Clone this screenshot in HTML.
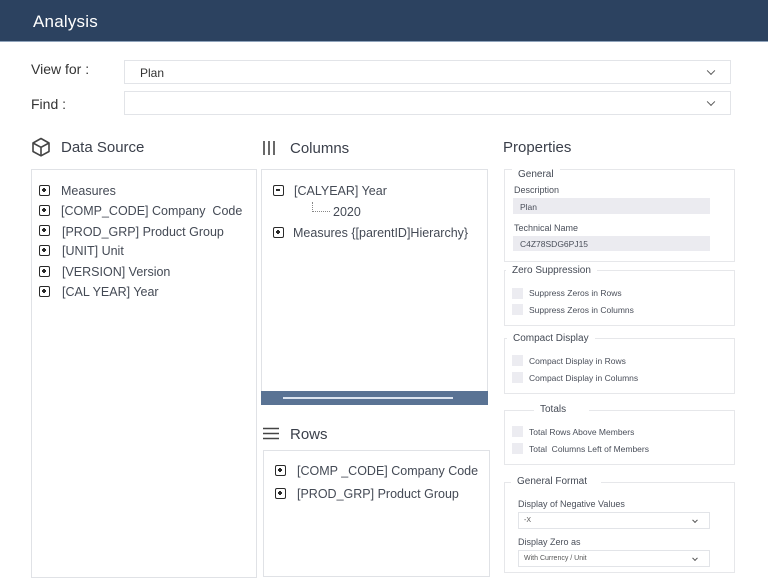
<!DOCTYPE html>
<html><head><meta charset="utf-8">
<style>
*{margin:0;padding:0;box-sizing:border-box}
body{width:768px;height:584px;background:#fff;font-family:"Liberation Sans",sans-serif;color:#3f4450;position:relative;overflow:hidden}
.a{position:absolute;white-space:nowrap}
.hdr{left:0;top:0;width:768px;height:42px;background:#2c4260;border-bottom:1px solid #8fa3bb}
.sel{border:1px solid #e2e4e8;background:#fff}
.chev{position:absolute;right:16px;top:50%;width:6px;height:6px;border-right:1.3px solid #555;border-bottom:1.3px solid #555;transform:translateY(-70%) rotate(45deg)}
.box{border:1px solid #e0e2e6;background:#fff}
.pl{width:11px;height:11px;border:1.5px solid #2a2a2a;border-radius:2px}
.pl:before{content:"";position:absolute;left:2px;top:3.3px;width:4px;height:1.4px;background:#2a2a2a}
.pl.p:after{content:"";position:absolute;left:3.3px;top:2px;width:1.4px;height:4px;background:#2a2a2a}
.t13{font-size:12.5px;color:#444a55}
.fs{border:1px solid #e6e7ea}
.lg{font-size:10px;color:#444a55;background:#fff;padding:0 6px}
.sm{font-size:8.5px;color:#4a4f5a}
.cb{width:11px;height:11px;background:#ececf1}
.inp{background:#ebebf0}
</style></head><body>
<div class="a hdr"></div>
<div class="a" style="left:33px;top:12px;font-size:17px;color:#fff;letter-spacing:0.2px">Analysis</div>

<div class="a" style="left:31px;top:61px;font-size:14px;color:#333">View for :</div>
<div class="a sel" style="left:124px;top:60px;width:607px;height:24px"><span class="a" style="left:15px;top:5px;font-size:12px;color:#333">Plan</span><div class="chev"></div></div>
<div class="a" style="left:31px;top:96px;font-size:14px;color:#333">Find :</div>
<div class="a sel" style="left:124px;top:91px;width:607px;height:24px"><div class="chev"></div></div>

<svg class="a" style="left:31px;top:137px" width="20" height="20" viewBox="0 0 20 20" fill="none" stroke="#444" stroke-width="1.6" stroke-linejoin="round"><path d="M10 1.5 18 6v8.5L10 18.8 2 14.5V6Z"/><path d="M2 6l8 4.3L18 6M10 10.3v8.5"/></svg>
<div class="a" style="left:61px;top:139px;font-size:15px;color:#3a3f4a">Data Source</div>
<div class="a box" style="left:31px;top:169px;width:226px;height:409px"></div>
<div class="a pl p" style="left:39px;top:185px"></div><div class="a t13" style="left:61px;top:184px">Measures</div>
<div class="a pl p" style="left:39px;top:205px"></div><div class="a t13" style="left:61px;top:204px">[COMP_CODE] Company&nbsp; Code</div>
<div class="a pl p" style="left:39px;top:225px"></div><div class="a t13" style="left:62px;top:225px">[PROD_GRP] Product Group</div>
<div class="a pl p" style="left:39px;top:245px"></div><div class="a t13" style="left:62px;top:244px">[UNIT] Unit</div>
<div class="a pl p" style="left:39px;top:266px"></div><div class="a t13" style="left:62px;top:265px">[VERSION] Version</div>
<div class="a pl p" style="left:39px;top:286px"></div><div class="a t13" style="left:62px;top:285px">[CAL YEAR] Year</div>

<svg class="a" style="left:262px;top:140px" width="14" height="16"><path d="M2 1v14M7 1v14M12 1v14" stroke="#444" stroke-width="1.6"/></svg>
<div class="a" style="left:290px;top:140px;font-size:15px;color:#3a3f4a">Columns</div>
<div class="a box" style="left:261px;top:169px;width:227px;height:223px"></div>
<div class="a pl" style="left:273px;top:185px"></div><div class="a t13" style="left:294px;top:184px">[CALYEAR] Year</div>
<div class="a" style="left:312px;top:202px;width:18px;height:10px;border-left:1px dotted #888;border-bottom:1px dotted #888"></div>
<div class="a t13" style="left:333px;top:205px">2020</div>
<div class="a pl p" style="left:273px;top:227px"></div><div class="a t13" style="left:293px;top:226px">Measures {[parentID]Hierarchy}</div>
<div class="a" style="left:261px;top:391px;width:227px;height:14px;background:#5a7394"></div>
<div class="a" style="left:283px;top:397px;width:170px;height:2px;background:#dde5f0"></div>

<svg class="a" style="left:263px;top:427px" width="16" height="13"><path d="M0 1.5h16M0 6.5h16M0 11.5h16" stroke="#444" stroke-width="1.5"/></svg>
<div class="a" style="left:290px;top:426px;font-size:15px;color:#3a3f4a">Rows</div>
<div class="a box" style="left:263px;top:450px;width:227px;height:127px"></div>
<div class="a pl p" style="left:275px;top:465px"></div><div class="a t13" style="left:297px;top:464px">[COMP _CODE] Company Code</div>
<div class="a pl p" style="left:275px;top:488px"></div><div class="a t13" style="left:297px;top:487px">[PROD_GRP] Product Group</div>

<div class="a" style="left:503px;top:139px;font-size:15px;color:#3a3f4a">Properties</div>

<div class="a fs" style="left:504px;top:169px;width:231px;height:93px"></div>
<div class="a lg" style="left:512px;top:169px">General</div>
<div class="a sm" style="left:514px;top:185px;font-size:9px">Description</div>
<div class="a inp" style="left:513px;top:198px;width:197px;height:16px"></div>
<div class="a sm" style="left:520px;top:202px">Plan</div>
<div class="a sm" style="left:514px;top:223px;font-size:9px">Technical Name</div>
<div class="a inp" style="left:513px;top:236px;width:197px;height:15px"></div>
<div class="a sm" style="left:520px;top:239px">C4Z78SDG6PJ15</div>

<div class="a fs" style="left:504px;top:270px;width:231px;height:56px"></div>
<div class="a lg" style="left:506px;top:265px">Zero Suppression</div>
<div class="a cb" style="left:512px;top:288px"></div><div class="a sm" style="left:529px;top:288px">Suppress Zeros in Rows</div>
<div class="a cb" style="left:512px;top:304px"></div><div class="a sm" style="left:529px;top:305px">Suppress Zeros in Columns</div>

<div class="a fs" style="left:504px;top:338px;width:231px;height:56px"></div>
<div class="a lg" style="left:507px;top:333px">Compact Display</div>
<div class="a cb" style="left:512px;top:355px"></div><div class="a sm" style="left:529px;top:356px">Compact Display in Rows</div>
<div class="a cb" style="left:512px;top:372px"></div><div class="a sm" style="left:529px;top:373px">Compact Display in Columns</div>

<div class="a fs" style="left:504px;top:410px;width:231px;height:55px"></div>
<div class="a lg" style="left:534px;top:404px">Totals&nbsp;&nbsp;&nbsp;&nbsp;&nbsp;&nbsp;</div>
<div class="a cb" style="left:512px;top:426px"></div><div class="a sm" style="left:529px;top:427px">Total Rows Above Members</div>
<div class="a cb" style="left:512px;top:443px"></div><div class="a sm" style="left:529px;top:444px">Total&nbsp; Columns Left of Members</div>

<div class="a fs" style="left:504px;top:482px;width:231px;height:91px"></div>
<div class="a lg" style="left:511px;top:476px">General Format&nbsp;&nbsp;&nbsp;</div>
<div class="a sm" style="left:518px;top:499px;font-size:9px">Display of Negative Values</div>
<div class="a sel" style="left:518px;top:512px;width:192px;height:17px"><span class="a" style="left:5px;top:4px;font-size:7px;color:#555">-X</span><div class="chev" style="width:4px;height:4px;right:12px"></div></div>
<div class="a sm" style="left:518px;top:537px;font-size:9px">Display Zero as</div>
<div class="a sel" style="left:518px;top:550px;width:192px;height:17px"><span class="a" style="left:5px;top:4px;font-size:7px;color:#555">With Currency / Unit</span><div class="chev" style="width:4px;height:4px;right:12px"></div></div>
</body></html>
